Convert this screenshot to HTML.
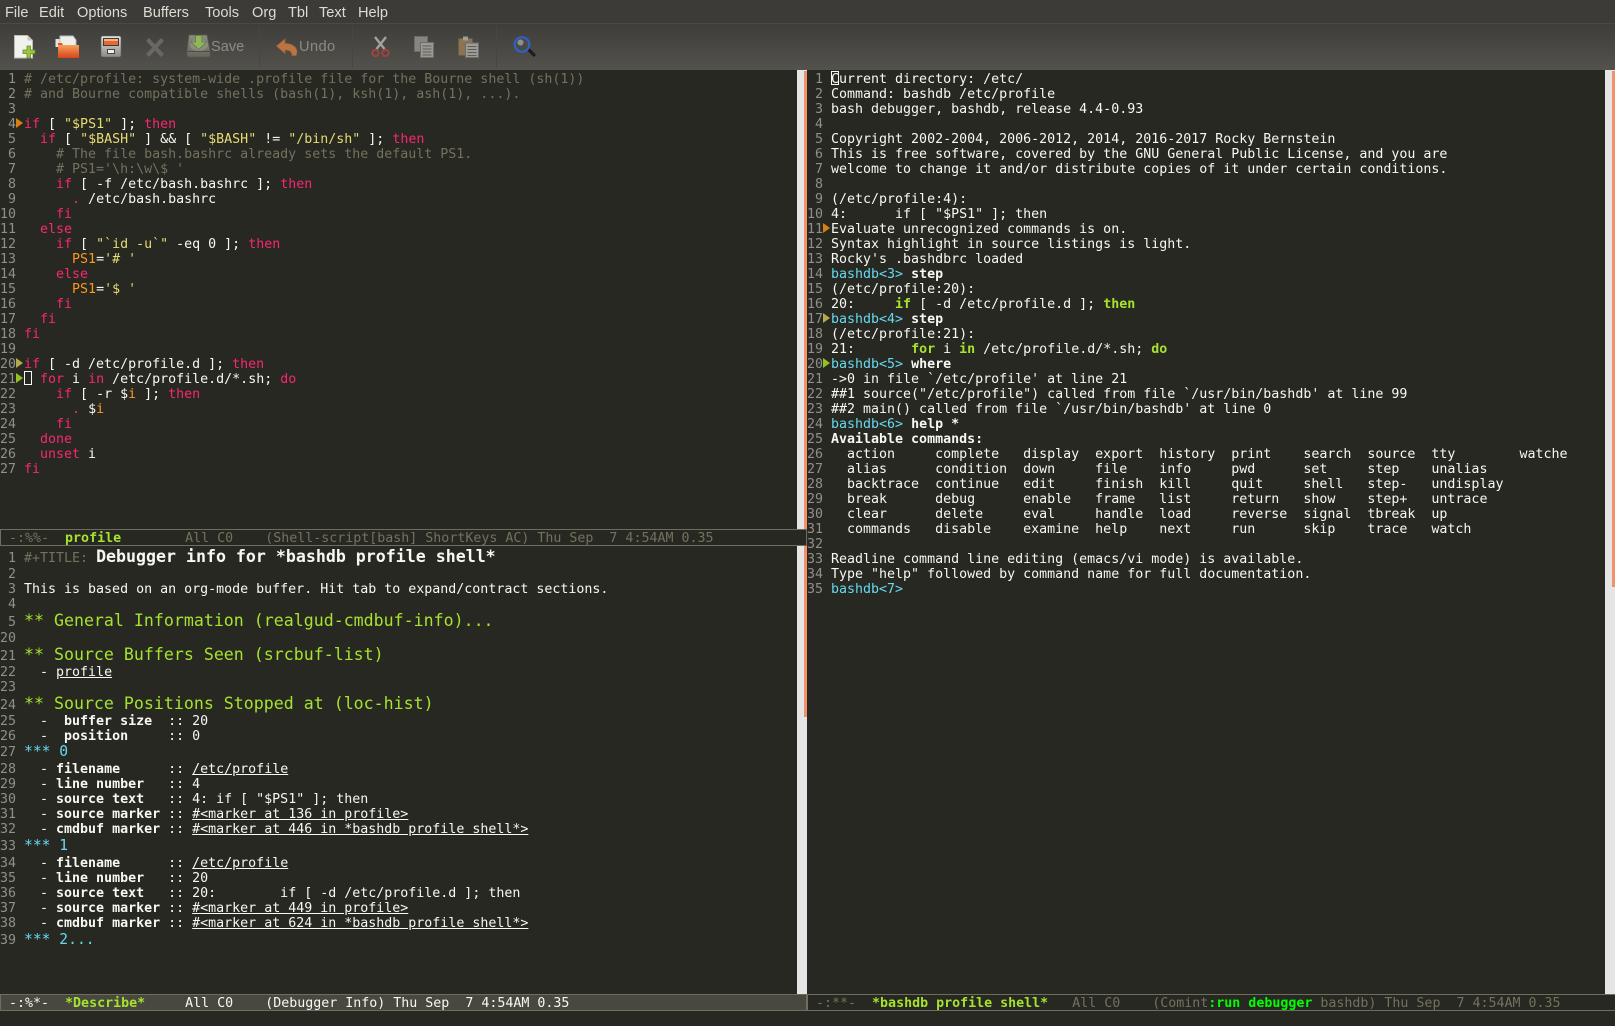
<!DOCTYPE html>
<html><head><meta charset="utf-8">
<style>
html,body{margin:0;padding:0;background:#272822;}
body{position:relative;width:1615px;height:1026px;overflow:hidden;font-family:"DejaVu Sans Mono","Liberation Mono",monospace;font-size:13.3px;color:#f8f8f2;}
#mb{position:absolute;left:0;top:0;width:1615px;height:24px;background:#3c3b37;border-bottom:1px solid #4a4944;box-sizing:border-box;}
#mb span{position:absolute;top:3px;font:14.6px/20px "Liberation Sans",sans-serif;color:#dfdbd2;white-space:pre;}
#tb{position:absolute;left:0;top:24px;width:1615px;height:46px;background:linear-gradient(#3e3d39,#53524d);}
#tb svg{position:absolute;left:0;top:-24px;}
#tb .t{position:absolute;top:14px;font:14.6px/18px "Liberation Sans",sans-serif;color:#8d8b83;}
#tb .sp{position:absolute;top:2px;width:1px;height:42px;background:#474641;}
.p{position:absolute;white-space:normal;line-height:15px;}
.l{white-space:pre;height:15px;line-height:15px;}
i{font-style:normal;display:inline-block;width:16px;margin-right:8px;text-align:right;color:#8f908a;font-weight:normal;font-size:13.3px;}
.k{color:#f92672}.s{color:#e6db74}.c{color:#75715e}.v{color:#fd971f}
.b{font-weight:bold}.pr{color:#66d9ef}.g{color:#a6e22e;font-weight:bold}
.u{text-decoration:underline}
.h2{font-size:16.6px;color:#a6e22e}.h3{font-size:14.67px;color:#66d9ef}
.ml{position:absolute;height:17px;box-sizing:border-box;border:1px solid #6e6d60;line-height:17px;white-space:pre;padding-left:8px;background:#272822;}
.a{position:absolute;width:0;height:0;border-top:5px solid transparent;border-bottom:5px solid transparent;border-left-width:7px;border-left-style:solid;}
.cur{position:absolute;width:7px;height:14px;border:1px solid #f8f8f2;box-sizing:border-box;}
.bar{position:absolute;}
</style></head><body>
<div id="mb">
<span style="left:5px">File</span><span style="left:39px">Edit</span><span style="left:77px">Options</span><span style="left:143px">Buffers</span><span style="left:205px">Tools</span><span style="left:252px">Org</span><span style="left:288px">Tbl</span><span style="left:319px">Text</span><span style="left:358px">Help</span>
</div>
<div id="tb">
<svg width="600" height="70" viewBox="0 0 600 70">
<!-- new -->
<path d="M14.5 35.5h13l5 5v17.5h-18z" fill="#f1f1ee" stroke="#bdbdb8"/><path d="M27.5 35.5v5h5z" fill="#c9c9c4"/>
<path d="M27 45h3.5v4h4.5v3.5h-4.5v4.500h-3.500v-4.500h-4v-3.500h4z" fill="#9bc63f" stroke="#5f8a22" stroke-width=".8" transform="translate(0,1)"/>
<!-- open -->
<path d="M60 36h13l3 4v7H60z" fill="#eeeeea" stroke="#bbb"/><path d="M55.500 39h4v8h-4z" fill="#e5e3dc"/>
<path d="M58 43v15h21V45H63l-1-2z" fill="#e2552a"/><rect x="58" y="45" width="21" height="13" fill="url(#fo)"/>
<defs><linearGradient id="fo" x1="0" y1="0" x2="0" y2="1"><stop offset="0" stop-color="#f5a15a"/><stop offset="1" stop-color="#d9431c"/></linearGradient>
<linearGradient id="cab" x1="0" y1="0" x2="0" y2="1"><stop offset="0" stop-color="#e4e4e0"/><stop offset="1" stop-color="#8a8a86"/></linearGradient>
<linearGradient id="drv" x1="0" y1="0" x2="0" y2="1"><stop offset="0" stop-color="#8d8c84"/><stop offset="1" stop-color="#66655e"/></linearGradient></defs>
<!-- cabinet -->
<rect x="101" y="36" width="20" height="21" rx="2" fill="url(#cab)" stroke="#5e5e5a" stroke-width=".6"/>
<rect x="103" y="38" width="16" height="8" fill="#3b3a38"/><rect x="104" y="39" width="14" height="2" fill="#f3b184"/><rect x="104" y="41" width="14" height="4" fill="#e8682e"/>
<rect x="107.500" y="49.500" width="7" height="4" fill="#eee" stroke="#444"/>
<!-- x -->
<path d="M149 41l12 13M161 41l-12 13" stroke="#686762" stroke-width="4.200" stroke-linecap="square" fill="none"/>
<!-- save -->
<path d="M189 35h18l3 16v4a2 2 0 0 1-2 2h-19a2 2 0 0 1-2-2v-4z" fill="url(#drv)" stroke="#5a5953" stroke-width=".7"/>
<path d="M187.500 51.500h22.500" stroke="#4d4c46"/><ellipse cx="199" cy="45" rx="9" ry="6" fill="#9a9990" opacity=".6"/>
<path d="M195.500 35.500h6.500v6.500h4.500l-7.800 7.500-7.700-7.500h4.500z" fill="#8fb65c" stroke="#5d7d38" stroke-width=".8"/>
<!-- undo -->
<path d="M276.500 46L285 39V43.500C292 43.500 297 47 297 52C297 53.500 296.500 54.500 296 55.500L292 55.500C292 51.500 289 50 285 50V53.500Z" fill="#bb7445" stroke="#a45f32" stroke-width=".7"/>
<!-- cut -->
<path d="M375 37l9.500 12M386 37l-9.500 12" stroke="#a3a29c" stroke-width="2.400" fill="none"/>
<circle cx="375.500" cy="53" r="3.200" fill="none" stroke="#a8403f" stroke-width="1.800"/><circle cx="385.500" cy="53" r="3.200" fill="none" stroke="#a8403f" stroke-width="1.800"/>
<!-- copy -->
<rect x="414.500" y="36.500" width="13" height="15" fill="#868580" stroke="#6d6c67"/><rect x="420.500" y="42.500" width="13" height="15" fill="#9a9993" stroke="#6d6c67"/>
<path d="M422.500 46h9M422.500 49h9M422.500 52h9M422.500 55h9" stroke="#5f5e59"/>
<!-- paste -->
<rect x="458.500" y="38.500" width="14" height="17" rx="1" fill="#8c7453" stroke="#6d5b40"/><rect x="463" y="36.500" width="5" height="4" fill="#9e9d96"/>
<rect x="465.500" y="43" width="13" height="14.500" fill="#9c9b95" stroke="#6d6c67"/>
<path d="M467.500 46.500h9M467.500 49.500h9M467.500 52.500h9M467.500 55.500h9" stroke="#5f5e59"/>
<!-- search -->
<path d="M529 50l5 5" stroke="#1d1d1c" stroke-width="3.200" stroke-linecap="round"/>
<circle cx="522" cy="44.500" r="7.300" fill="#4a4a48" stroke="#2f61c4" stroke-width="2.200"/><circle cx="520.500" cy="42.500" r="3" fill="#8f8f8d"/>
</svg>
<div class="t" style="left:211px">Save</div>
<div class="sp" style="left:259px"></div>
<div class="t" style="left:299px;letter-spacing:.4px">Undo</div>
<div class="sp" style="left:352px"></div>
<div class="sp" style="left:496px"></div>
</div>

<!-- scrollbars -->
<div class="bar" style="left:797px;top:70px;width:10px;height:924px;background:#e5e5e5"></div>
<div class="bar" style="left:804px;top:71px;width:3px;height:458px;background:#f2906a"></div>
<div class="bar" style="left:804px;top:546px;width:3px;height:171px;background:#f2906a"></div>
<div class="bar" style="left:1605px;top:70px;width:10px;height:924px;background:#e5e5e5"></div>
<div class="bar" style="left:1612px;top:71px;width:3px;height:516px;background:#f2906a"></div>

<!-- top-left -->
<div class="p" style="left:0;top:72px"><div class="l"><i>1</i><span class="c"># /etc/profile: system-wide .profile file for the Bourne shell (sh(1))</span></div><div class="l"><i>2</i><span class="c"># and Bourne compatible shells (bash(1), ksh(1), ash(1), ...).</span></div><div class="l"><i>3</i></div><div class="l"><i>4</i><span class="k">if</span> [ <span class="s">"$PS1"</span> ]; <span class="k">then</span></div><div class="l"><i>5</i>  <span class="k">if</span> [ <span class="s">"$BASH"</span> ] &amp;&amp; [ <span class="s">"$BASH"</span> != <span class="s">"/bin/sh"</span> ]; <span class="k">then</span></div><div class="l"><i>6</i><span class="c">    # The file bash.bashrc already sets the default PS1.</span></div><div class="l"><i>7</i><span class="c">    # PS1='\h:\w\$ '</span></div><div class="l"><i>8</i>    <span class="k">if</span> [ -f /etc/bash.bashrc ]; <span class="k">then</span></div><div class="l"><i>9</i>      <span class="k">.</span> /etc/bash.bashrc</div><div class="l"><i>10</i>    <span class="k">fi</span></div><div class="l"><i>11</i>  <span class="k">else</span></div><div class="l"><i>12</i>    <span class="k">if</span> [ <span class="s">"`id -u`"</span> -eq 0 ]; <span class="k">then</span></div><div class="l"><i>13</i>      <span class="v">PS1</span>=<span class="s">'# '</span></div><div class="l"><i>14</i>    <span class="k">else</span></div><div class="l"><i>15</i>      <span class="v">PS1</span>=<span class="s">'$ '</span></div><div class="l"><i>16</i>    <span class="k">fi</span></div><div class="l"><i>17</i>  <span class="k">fi</span></div><div class="l"><i>18</i><span class="k">fi</span></div><div class="l"><i>19</i></div><div class="l"><i>20</i><span class="k">if</span> [ -d /etc/profile.d ]; <span class="k">then</span></div><div class="l"><i>21</i>  <span class="k">for</span> i <span class="k">in</span> /etc/profile.d/*.sh; <span class="k">do</span></div><div class="l"><i>22</i>    <span class="k">if</span> [ -r $<span class="v">i</span> ]; <span class="k">then</span></div><div class="l"><i>23</i>      <span class="k">.</span> $<span class="v">i</span></div><div class="l"><i>24</i>    <span class="k">fi</span></div><div class="l"><i>25</i>  <span class="k">done</span></div><div class="l"><i>26</i>  <span class="k">unset</span> i</div><div class="l"><i>27</i><span class="k">fi</span></div></div>
<div class="a" style="left:16px;top:118px;border-left-color:#d97f10"></div>
<div class="a" style="left:16px;top:358px;border-left-color:#b5a94e"></div>
<div class="a" style="left:16px;top:373px;border-left-color:#94c11f"></div>
<div class="cur" style="left:24px;top:371px;width:8px"></div>

<div class="ml" style="left:0;top:529px;width:807px;color:#75715e">-:%%-  <span class="g">profile</span>        All C0    (Shell-script[bash] ShortKeys AC) Thu Sep  7 4:54AM 0.35</div>

<!-- bottom-left -->
<div class="p" style="left:0;top:546px">
<div class="l" style="height:21px;line-height:22px"><i>1</i><span class="c">#+TITLE: </span><span class="b" style="font-size:16.6px">Debugger info for *bashdb profile shell*</span></div>
<div class="l"><i>2</i></div>
<div class="l"><i>3</i>This is based on an org-mode buffer. Hit tab to expand/contract sections.</div>
<div class="l" style="height:14px"><i>4</i></div>
<div class="l" style="height:20px;line-height:19px"><i>5</i><span class="h2">** General Information (realgud-cmdbuf-info)...</span></div>
<div class="l" style="height:14px"><i>20</i></div>
<div class="l" style="height:20px;line-height:19px"><i>21</i><span class="h2">** Source Buffers Seen (srcbuf-list)</span></div>
<div class="l"><i>22</i>  - <span class="u">profile</span></div>
<div class="l" style="height:14px"><i>23</i></div>
<div class="l" style="height:20px;line-height:19px"><i>24</i><span class="h2">** Source Positions Stopped at (loc-hist)</span></div>
<div class="l"><i>25</i>  -  <span class="b">buffer size</span>  :: 20</div>
<div class="l" style="height:14px"><i>26</i>  -  <span class="b">position</span>     :: 0</div>
<div class="l" style="height:19px;line-height:17px"><i>27</i><span class="h3">*** 0</span></div>
<div class="l"><i>28</i>  - <span class="b">filename</span>      :: <span class="u">/etc/profile</span></div>
<div class="l"><i>29</i>  - <span class="b">line number</span>   :: 4</div>
<div class="l"><i>30</i>  - <span class="b">source text</span>   :: 4: if [ "$PS1" ]; then</div>
<div class="l"><i>31</i>  - <span class="b">source marker</span> :: <span class="u">#&lt;marker at 136 in profile&gt;</span></div>
<div class="l"><i>32</i>  - <span class="b">cmdbuf marker</span> :: <span class="u">#&lt;marker at 446 in *bashdb profile shell*&gt;</span></div>
<div class="l" style="height:19px;line-height:17px"><i>33</i><span class="h3">*** 1</span></div>
<div class="l"><i>34</i>  - <span class="b">filename</span>      :: <span class="u">/etc/profile</span></div>
<div class="l"><i>35</i>  - <span class="b">line number</span>   :: 20</div>
<div class="l"><i>36</i>  - <span class="b">source text</span>   :: 20:        if [ -d /etc/profile.d ]; then</div>
<div class="l"><i>37</i>  - <span class="b">source marker</span> :: <span class="u">#&lt;marker at 449 in profile&gt;</span></div>
<div class="l"><i>38</i>  - <span class="b">cmdbuf marker</span> :: <span class="u">#&lt;marker at 624 in *bashdb profile shell*&gt;</span></div>
<div class="l" style="height:17px;line-height:17px"><i>39</i><span class="h3">*** 2...</span></div>
</div>
<div class="ml" style="left:0;top:994px;width:807px;background:#49483e;height:17px">-:%*-  <span class="g">*Describe*</span>     All C0    (Debugger Info) Thu Sep  7 4:54AM 0.35</div>

<!-- right -->
<div class="p" style="left:807px;top:72px">
<div class="l"><i>1</i>Current directory: /etc/</div>
<div class="l"><i>2</i>Command: bashdb /etc/profile</div>
<div class="l"><i>3</i>bash debugger, bashdb, release 4.4-0.93</div>
<div class="l"><i>4</i></div>
<div class="l"><i>5</i>Copyright 2002-2004, 2006-2012, 2014, 2016-2017 Rocky Bernstein</div>
<div class="l"><i>6</i>This is free software, covered by the GNU General Public License, and you are</div>
<div class="l"><i>7</i>welcome to change it and/or distribute copies of it under certain conditions.</div>
<div class="l"><i>8</i></div>
<div class="l"><i>9</i>(/etc/profile:4):</div>
<div class="l"><i>10</i>4:      if [ "$PS1" ]; then</div>
<div class="l"><i>11</i>Evaluate unrecognized commands is on.</div>
<div class="l"><i>12</i>Syntax highlight in source listings is light.</div>
<div class="l"><i>13</i>Rocky's .bashdbrc loaded</div>
<div class="l"><i>14</i><span class="pr">bashdb&lt;3&gt;</span> <span class="b">step</span></div>
<div class="l"><i>15</i>(/etc/profile:20):</div>
<div class="l"><i>16</i>20:     <span class="g">if</span> [ -d /etc/profile.d ]; <span class="g">then</span></div>
<div class="l"><i>17</i><span class="pr">bashdb&lt;4&gt;</span> <span class="b">step</span></div>
<div class="l"><i>18</i>(/etc/profile:21):</div>
<div class="l"><i>19</i>21:       <span class="g">for</span> i <span class="g">in</span> /etc/profile.d/*.sh; <span class="g">do</span></div>
<div class="l"><i>20</i><span class="pr">bashdb&lt;5&gt;</span> <span class="b">where</span></div>
<div class="l"><i>21</i>-&gt;0 in file `/etc/profile' at line 21</div>
<div class="l"><i>22</i>##1 source("/etc/profile") called from file `/usr/bin/bashdb' at line 99</div>
<div class="l"><i>23</i>##2 main() called from file `/usr/bin/bashdb' at line 0</div>
<div class="l"><i>24</i><span class="pr">bashdb&lt;6&gt;</span> <span class="b">help *</span></div>
<div class="l"><i>25</i><span class="b">Available commands:</span></div>
<div class="l"><i>26</i>  action     complete   display  export  history  print    search  source  tty        watche</div>
<div class="l"><i>27</i>  alias      condition  down     file    info     pwd      set     step    unalias</div>
<div class="l"><i>28</i>  backtrace  continue   edit     finish  kill     quit     shell   step-   undisplay</div>
<div class="l"><i>29</i>  break      debug      enable   frame   list     return   show    step+   untrace</div>
<div class="l"><i>30</i>  clear      delete     eval     handle  load     reverse  signal  tbreak  up</div>
<div class="l"><i>31</i>  commands   disable    examine  help    next     run      skip    trace   watch</div>
<div class="l"><i>32</i></div>
<div class="l"><i>33</i>Readline command line editing (emacs/vi mode) is available.</div>
<div class="l"><i>34</i>Type "help" followed by command name for full documentation.</div>
<div class="l"><i>35</i><span class="pr">bashdb&lt;7&gt;</span></div>
</div>
<div class="cur" style="left:831px;top:71px;width:8px"></div>
<div class="a" style="left:823px;top:223px;border-left-color:#d97f10"></div>
<div class="a" style="left:823px;top:313px;border-left-color:#b5a94e"></div>
<div class="a" style="left:823px;top:358px;border-left-color:#94c11f"></div>

<div class="ml" style="left:807px;top:994px;width:808px;color:#75715e;border-right:0">-:**-  <span class="g">*bashdb profile shell*</span>   All C0    (Comint<span class="b" style="color:#00ff00">:run debugger</span> bashdb) Thu Sep  7 4:54AM 0.35</div>
</body></html>
